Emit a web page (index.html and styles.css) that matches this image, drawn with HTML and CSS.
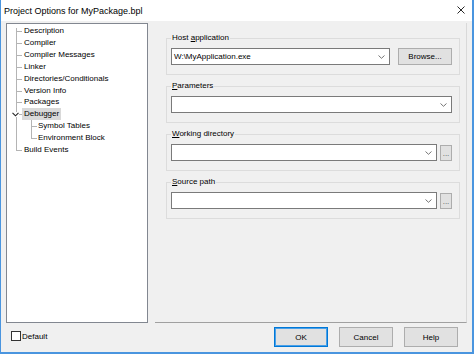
FILE: index.html
```html
<html>
  <head>
    <link rel="stylesheet" href="styles.css">
  </head>
  <body>
    <div class="window">
      <div class="titlebar">
        <span class="title">Project Options for MyPackage.bpl</span>
        <svg class="close" width="8" height="8" viewBox="0 0 8 8">
          <path d="M0.5 0.5 L7.5 7.5 M7.5 0.5 L0.5 7.5" stroke="#111" stroke-width="0.9" fill="none"/>
        </svg>
      </div>
      <div class="client">
        <div class="main">
          <div class="tree">
            <ul class="root">
              <li>Description</li>
              <li>Compiler</li>
              <li>Compiler Messages</li>
              <li>Linker</li>
              <li>Directories/Conditionals</li>
              <li>Version Info</li>
              <li>Packages</li>
              <li class="open">
                <svg class="expander" width="7" height="5" viewBox="0 0 7 5">
                  <path d="M0.5 0.8 L3.5 3.8 L6.5 0.8" stroke="#222" stroke-width="1.1" fill="none"/>
                </svg>
                <span class="sel">Debugger</span>
                <ul class="sub">
                  <li>Symbol Tables</li>
                  <li>Environment Block</li>
                </ul>
              </li>
              <li>Build Events</li>
            </ul>
          </div>
          <div class="page">
            <fieldset class="group">
              <legend>Host <u>a</u>pplication</legend>
              <div class="row">
                <div class="combo wide-host">
                  <span>W:\MyApplication.exe</span>
                  <svg class="arrow" width="7" height="4" viewBox="0 0 7 4"><path d="M0.5 0.5 L3.5 3.3 L6.5 0.5" stroke="#666" stroke-width="0.9" fill="none"/></svg>
                </div>
                <div class="btn browse">Browse...</div>
              </div>
            </fieldset>
            <fieldset class="group">
              <legend><u>P</u>arameters</legend>
              <div class="row">
                <div class="combo full">
                  <span></span>
                  <svg class="arrow" width="7" height="4" viewBox="0 0 7 4"><path d="M0.5 0.5 L3.5 3.3 L6.5 0.5" stroke="#666" stroke-width="0.9" fill="none"/></svg>
                </div>
              </div>
            </fieldset>
            <fieldset class="group">
              <legend><u>W</u>orking directory</legend>
              <div class="row">
                <div class="combo with-dots">
                  <span></span>
                  <svg class="arrow" width="7" height="4" viewBox="0 0 7 4"><path d="M0.5 0.5 L3.5 3.3 L6.5 0.5" stroke="#666" stroke-width="0.9" fill="none"/></svg>
                </div>
                <div class="btn dots">...</div>
              </div>
            </fieldset>
            <fieldset class="group">
              <legend><u>S</u>ource path</legend>
              <div class="row">
                <div class="combo with-dots">
                  <span></span>
                  <svg class="arrow" width="7" height="4" viewBox="0 0 7 4"><path d="M0.5 0.5 L3.5 3.3 L6.5 0.5" stroke="#666" stroke-width="0.9" fill="none"/></svg>
                </div>
                <div class="btn dots">...</div>
              </div>
            </fieldset>
          </div>
        </div>
        <div class="footer">
          <div class="check"><span class="box"></span>Default</div>
          <div class="buttons">
            <div class="btn dlg default">OK</div>
            <div class="btn dlg">Cancel</div>
            <div class="btn dlg">Help</div>
          </div>
        </div>
      </div>
    </div>
  </body>
</html>
```

FILE: styles.css
```css
body {
  margin: 0;
  background-color: #ffffff;
  font-family: "Liberation Sans", Arial, sans-serif;
}
.window {
  width: 474px;
  height: 354px;
  box-sizing: border-box;
  border-left: 1px solid #4a95df;
  border-right: 2px solid #4a95df;
  border-bottom: 2px solid #4a95df;
  display: flex;
  flex-direction: column;
}
.titlebar {
  height: 21px;
  background-color: #ffffff;
  display: flex;
  align-items: center;
  justify-content: space-between;
  padding: 0 7px 0 3px;
}
.title {
  font-size: 9px;
  color: #000;
}
.close {
  margin-top: -1px;
}
.client {
  flex: 1;
  background-color: #f0f0f0;
  display: flex;
  flex-direction: column;
  font-size: 8px;
  color: #000;
}
.main {
  display: flex;
  height: 302px;
}
.tree {
  margin: 2px 0 0 5px;
  width: 142px;
  height: 300px;
  box-sizing: border-box;
  border: 1px solid #828790;
  background-color: #ffffff;
  padding-top: 1px;
}
.tree ul {
  list-style: none;
  margin: 0;
  padding: 0;
}
.tree li {
  position: relative;
  line-height: 11.9px;
  white-space: nowrap;
}
.root > li {
  padding-left: 17px;
}
.root > li::before {
  content: "";
  position: absolute;
  left: 9px;
  top: 6px;
  width: 6px;
  border-top: 1px solid #b4b4b4;
}
.root > li::after {
  content: "";
  position: absolute;
  left: 9px;
  top: 0;
  bottom: 0;
  border-left: 1px solid #b4b4b4;
}
.root > li:first-child::after {
  top: 3px;
}
.root > li:last-child::after {
  bottom: auto;
  height: 6px;
}
.sub > li {
  padding-left: 14px;
}
.sub > li::before {
  content: "";
  position: absolute;
  left: 7px;
  top: 6px;
  width: 6px;
  border-top: 1px solid #b4b4b4;
}
.sub > li::after {
  content: "";
  position: absolute;
  left: 7px;
  top: 0;
  bottom: 0;
  border-left: 1px solid #b4b4b4;
}
.sub > li:last-child::after {
  bottom: auto;
  height: 6px;
}
.sel {
  background-color: #d9d9d9;
  padding: 0 2px;
  margin-left: -2px;
  display: inline-block;
}
.expander {
  position: absolute;
  left: 5px;
  top: 4px;
  z-index: 1;
  background-color: #ffffff;
}
.page {
  margin: 2px 0 0 7px;
  width: 312px;
  height: 300px;
  box-sizing: border-box;
  border-right: 1px solid #d9d9d9;
  border-bottom: 1px solid #a0a0a0;
  padding: 9px 6px 0 11px;
  display: flex;
  flex-direction: column;
  gap: 5px;
}
.group {
  margin: 0;
  border: 1px solid #dcdcdc;
  padding: 0 7px 9px 4px;
}
.group legend {
  padding: 0 1px;
  line-height: 12px;
  font-size: 8px;
}
.row {
  display: flex;
  align-items: center;
  gap: 3px;
  margin-top: 4px;
}
.combo {
  height: 17px;
  box-sizing: border-box;
  border: 1px solid #7a7a7a;
  background-color: #ffffff;
  display: flex;
  align-items: center;
  padding: 0 4px 0 2px;
}
.combo .arrow {
  margin-left: auto;
}
.wide-host {
  width: 219px;
  margin-right: 5px;
}
.full {
  width: 281px;
}
.with-dots {
  width: 266px;
}
.btn {
  box-sizing: border-box;
  background-color: #e1e1e1;
  border: 1px solid #adadad;
  display: flex;
  align-items: center;
  justify-content: center;
}
.browse {
  width: 54px;
  height: 17px;
}
.dots {
  width: 12px;
  height: 16px;
  align-items: flex-end;
  padding-bottom: 3px;
  line-height: 6px;
  font-size: 8px;
  color: #555;
}
.footer {
  flex: 1;
  display: flex;
  align-items: flex-start;
  padding: 4px 14px 0 10px;
}
.check {
  display: flex;
  align-items: center;
  margin-top: 4px;
}
.box {
  width: 10px;
  height: 10px;
  box-sizing: border-box;
  border: 1px solid #333;
  background-color: #fff;
  margin-right: 1px;
}
.buttons {
  margin-left: auto;
  display: flex;
  gap: 11px;
}
.dlg {
  width: 54px;
  height: 20px;
}
.default {
  border-color: #0078d7;
  box-shadow: inset 0 0 0 1px #4aa0e8;
}
```
